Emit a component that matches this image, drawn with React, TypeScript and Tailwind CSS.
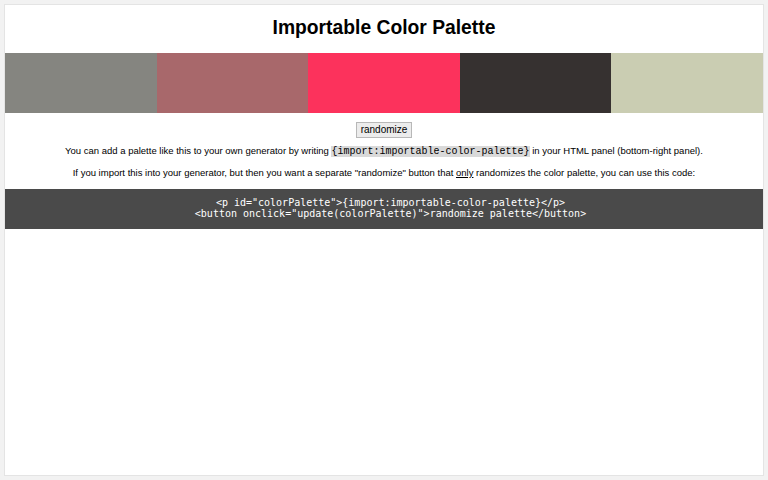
const colors = ["#858580", "#a8686b", "#fc325c", "#363130", "#cacdb2"];

export default function App() {
  return (
    <div className="h-[480px] bg-[#f2f2f2] p-[5px] font-['Liberation_Sans',Arial,sans-serif]">
      <div className="h-[470px] w-[758px] bg-white shadow-[0_0_0_1px_#e4e4e4]">
        <h1 className="pt-[11px] pb-[13px] text-center text-[19.3px] font-bold leading-[24px] text-black">
          Importable Color Palette
        </h1>
        <div className="flex h-[60px]">
          {colors.map((c) => (
            <div key={c} className="flex-1" style={{ backgroundColor: c }} />
          ))}
        </div>
        <div className="mt-[9px] flex justify-center">
          <button className="h-[16px] border border-[#b8b8b8] bg-[#ececec] px-[4px] text-[10px] leading-[14px] text-black">
            randomize
          </button>
        </div>
        <p className="mt-[7px] text-center text-[9.5px] leading-[12px] text-black">
          You can add a palette like this to your own generator by writing{" "}
          <code className="bg-[#d9d9d9] font-['Liberation_Mono',monospace] text-[10px]">
            {"{import:importable-color-palette}"}
          </code>{" "}
          in your HTML panel (bottom-right panel).
        </p>
        <p className="mt-[9px] text-center text-[9.5px] leading-[12px] text-black">
          If you import this into your generator, but then you want a separate "randomize" button that{" "}
          <u>only</u> randomizes the color palette, you can use this code:
        </p>
        <pre className="mt-[10px] h-[40px] bg-[#4a4a4a] pl-[13px] pt-[8px] text-center font-['DejaVu_Sans_Mono',monospace] text-[10px] leading-[11px] text-white">
          {'<p id="colorPalette">{import:importable-color-palette}</p>\n<button onclick="update(colorPalette)">randomize palette</button>'}
        </pre>
      </div>
    </div>
  );
}
